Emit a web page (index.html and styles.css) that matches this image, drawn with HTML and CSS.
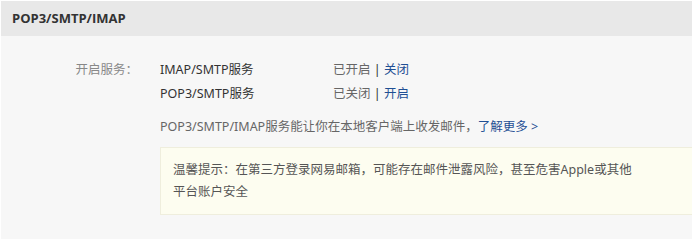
FILE: index.html
```html
<!DOCTYPE html>
<html lang="zh-CN">
<head>
  <meta charset="UTF-8">
  <title>POP3/SMTP/IMAP</title>
  <link rel="stylesheet" href="styles.css">
</head>
<body>
<div class="panel">
  <div class="panel-head">POP3/SMTP/IMAP</div>
  <div class="panel-body">
    <div class="form-row">
      <div class="label">开启服务：</div>
      <div class="field">
        <div class="service">
          <span class="service-name">IMAP/SMTP服务</span>
          <span class="service-state">已开启 <span class="sep">|</span> <a href="#" class="link">关闭</a></span>
        </div>
        <div class="service">
          <span class="service-name">POP3/SMTP服务</span>
          <span class="service-state">已关闭 <span class="sep">|</span> <a href="#" class="link">开启</a></span>
        </div>
        <p class="desc">POP3/SMTP/IMAP服务能让你在本地客户端上收发邮件，<a href="#" class="link">了解更多 &gt;</a></p>
        <div class="tip">
          温馨提示：在第三方登录网易邮箱，可能存在邮件泄露风险，甚至危害Apple或其他<br>平台账户安全
        </div>
      </div>
    </div>
  </div>
</div>
</body>
</html>
```

FILE: styles.css
```css
body {
  margin: 0;
  background-color: #fff;
  font-family: 'Noto Sans', 'Noto Sans CJK SC', sans-serif;
  font-size: 12.5px;
  color: #333;
}
.panel {
  margin: 1px 0 0 1px;
  height: 238px;
  background-color: #f7f7f7;
}
.panel-head {
  height: 35px;
  line-height: 35px;
  padding-left: 11px;
  background-color: #e8e8e8;
  font-family: 'Open Sans', sans-serif;
  font-size: 13px;
  font-weight: bold;
  color: #333;
}
.panel-body {
  padding-top: 22px;
}
.form-row {
  display: grid;
  grid-template-columns: 137px 1fr;
  column-gap: 22px;
}
.label {
  line-height: 24px;
  text-align: right;
  color: #888;
}
.service {
  display: flex;
  line-height: 24px;
}
.service-name {
  width: 173px;
}
.service-state {
  color: #666;
}
.sep {
  color: #333;
}
.link {
  color: #1f4f94;
  text-decoration: none;
}
.desc {
  margin: 9px 0 0;
  line-height: 24px;
  color: #666;
}
.tip {
  margin-top: 8px;
  padding: 11px 12px;
  line-height: 22px;
  background-color: #fdfdf0;
  border: 1px solid #efeedd;
  border-right: none;
  color: #555;
}
```
